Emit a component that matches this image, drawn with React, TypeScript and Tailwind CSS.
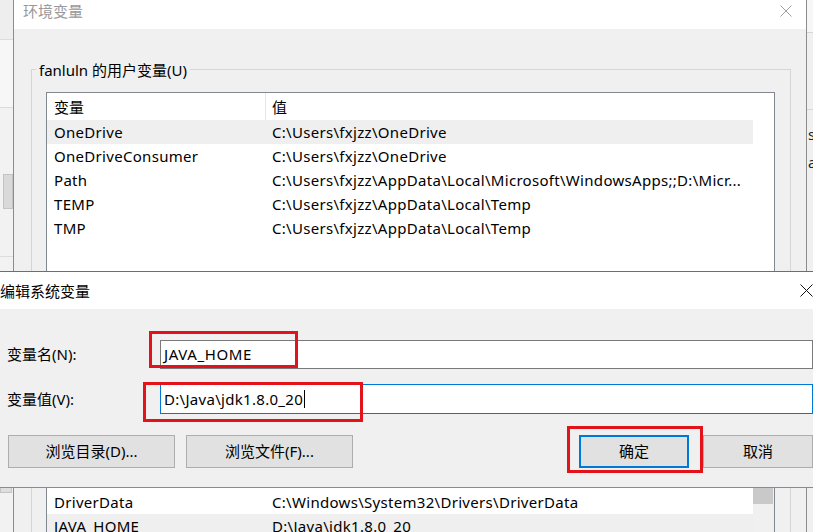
import React from "react";

type Row = { name: string; value: string; selected?: boolean };

const userRows: Row[] = [
  { name: "OneDrive", value: "C:\\Users\\fxjzz\\OneDrive", selected: true },
  { name: "OneDriveConsumer", value: "C:\\Users\\fxjzz\\OneDrive" },
  { name: "Path", value: "C:\\Users\\fxjzz\\AppData\\Local\\Microsoft\\WindowsApps;;D:\\Micr..." },
  { name: "TEMP", value: "C:\\Users\\fxjzz\\AppData\\Local\\Temp" },
  { name: "TMP", value: "C:\\Users\\fxjzz\\AppData\\Local\\Temp" },
];

const systemRows: Row[] = [
  { name: "ComSpec", value: "C:\\Windows\\system32\\cmd.exe" },
  { name: "DriverData", value: "C:\\Windows\\System32\\Drivers\\DriverData" },
  { name: "JAVA_HOME", value: "D:\\Java\\jdk1.8.0_20", selected: true },
];

function CloseIcon({ color, size }: { color: string; size: number }) {
  return (
    <svg width={size} height={size} viewBox={`0 0 ${size} ${size}`} className="shrink-0">
      <path d={`M0.5 0.5 L${size - 0.5} ${size - 0.5} M${size - 0.5} 0.5 L0.5 ${size - 0.5}`} stroke={color} strokeWidth="1" fill="none" />
    </svg>
  );
}

function ListHeader() {
  return (
    <div className="flex h-[27px] w-[706px] shrink-0 bg-white">
      <div className="h-full w-[219px] shrink-0 border-r border-[#e5e5e5] pl-[7px] pt-[2px] leading-[25px]">变量</div>
      <div className="pl-[6px] pt-[2px] leading-[25px]">值</div>
    </div>
  );
}

function ListRow({ row }: { row: Row }) {
  return (
    <div className={`flex h-[24px] w-[706px] shrink-0 leading-[24px] tracking-[0.3px] ${row.selected ? "bg-[#efefef]" : ""}`}>
      <div className="w-[219px] shrink-0 overflow-hidden whitespace-nowrap pl-[7px]">{row.name}</div>
      <div className="min-w-0 flex-1 overflow-hidden whitespace-nowrap pl-[6px]">{row.value}</div>
    </div>
  );
}

function LeftStrip() {
  return (
    <div className="flex w-[13px] shrink-0 flex-col bg-[#f2f2f2]">
      <div className="h-[40px] shrink-0 border-b border-[#dcdcdc] bg-[#eeeeee]" />
      <div className="h-[68px] shrink-0 border-b border-[#dcdcdc] bg-[#f7f7f7]" />
      <div className="h-[66px] shrink-0" />
      <div className="ml-[3px] h-[35px] shrink-0 border border-[#c4c4c4] bg-[#d9d9d9]" />
      <div className="h-[48px] shrink-0 border-b border-[#dcdcdc]" />
      <div className="h-[228px] shrink-0" />
      <div className="h-[8px] w-[12px] shrink-0 border border-[#c4c4c4] bg-[#dedede]" />
    </div>
  );
}

function RightStrip() {
  return (
    <div className="flex min-w-0 flex-1 flex-col overflow-hidden bg-[#f0f0f0]">
      <div className="h-[33px] shrink-0 border-b border-[#d6d6d6] bg-[#f7f7f7]" />
      <div className="h-[77px] shrink-0 border-b border-[#d6d6d6]" />
      <div className="mt-[10px] pl-[1px] leading-[28px] text-[#222]">s</div>
      <div className="pl-[1px] leading-[28px] text-[#222]">a</div>
    </div>
  );
}

function EnvWindow() {
  return (
    <div className="flex w-[794px] shrink-0 flex-col border-x border-[#8c8c8c]">
      <div className="flex h-[29px] shrink-0 items-start justify-between bg-white pl-[9px] pr-[14px]">
        <span className="leading-[22px] text-[#999999]">环境变量</span>
        <div className="mt-[5px]">
          <CloseIcon color="#a0a0a0" size={12} />
        </div>
      </div>
      <div className="flex-1 bg-[#f0f0f0] pl-[17px] pr-[15px] pt-[40px]">
        <div className="relative h-[500px] border-x border-t border-[#d5d5d5] pl-[14px] pr-[15px] pt-[22px]">
          <span className="absolute left-[4px] top-[-10px] bg-[#f0f0f0] px-[3px] leading-[20px]">fanluln 的用户变量(U)</span>

          <div className="flex h-[200px] flex-col overflow-hidden border border-[#828790] bg-white">
            <ListHeader />
            {userRows.map((r) => (
              <ListRow key={r.name} row={r} />
            ))}
          </div>

          <div className="h-[146px]" />

          <div className="flex h-[200px] overflow-hidden border border-[#828790] bg-white">
            <div className="flex w-[706px] shrink-0 flex-col">
              <ListHeader />
              {systemRows.map((r) => (
                <ListRow key={r.name} row={r} />
              ))}
            </div>
            <div className="flex w-[21px] shrink-0 flex-col bg-[#f0f0f0]">
              <div className="mt-[17px] h-[48px] w-[20px] bg-[#c9c9c9]" />
            </div>
          </div>
        </div>
      </div>
    </div>
  );
}

function EditDialog() {
  return (
    <div className="absolute left-0 top-[271px] w-[813px] border-y border-b-[#8a8a8a] border-t-[#6e6e6e]">
      <div className="flex h-[37px] items-center justify-between bg-white">
        <span className="leading-[20px]">编辑系统变量</span>
        <CloseIcon color="#111111" size={13} />
      </div>
      <div className="bg-[#f0f0f0] pb-[19px] pt-[31px]">
        <div className="flex h-[29px] items-center">
          <div className="w-[160px] shrink-0 pl-[7px]">变量名(N):</div>
          <div className="flex h-full flex-1 items-center border border-[#7a7a7a] bg-white pl-[3px] tracking-[0.6px]">JAVA_HOME</div>
        </div>
        <div className="mt-[15px] flex h-[30px] items-center">
          <div className="w-[160px] shrink-0 pl-[7px]">变量值(V):</div>
          <div className="flex h-full flex-1 items-center border border-[#0078d7] bg-white pl-[3px] tracking-[0.3px]">
            <span>D:\Java\jdk1.8.0_20</span>
            <span className="ml-[1px] h-[18px] w-[1px] bg-black" />
          </div>
        </div>
        <div className="mt-[21px] flex h-[33px] pl-[8px]">
          <button className="h-full w-[167px] border border-[#adadad] bg-[#e1e1e1]">浏览目录(D)...</button>
          <button className="ml-[11px] h-full w-[167px] border border-[#adadad] bg-[#e1e1e1]">浏览文件(F)...</button>
          <button className="ml-auto h-full w-[110px] border-2 border-[#0078d7] bg-[#e1e1e1]">确定</button>
          <button className="ml-[14px] h-full w-[110px] border border-[#adadad] bg-[#e1e1e1]">取消</button>
        </div>
      </div>
    </div>
  );
}

export default function App() {
  return (
    <div className="relative h-[532px] w-[813px] overflow-hidden bg-[#f0f0f0] font-['Noto_Sans','Noto_Sans_CJK_SC',sans-serif] text-[15px] text-black">
      <div className="flex h-full">
        <LeftStrip />
        <EnvWindow />
        <RightStrip />
      </div>

      <EditDialog />

      {/* red highlight boxes drawn over the screenshot */}
      <div className="pointer-events-none absolute left-[149px] top-[331px] h-[37px] w-[149px] border-[3px] border-[#e3131b]" />
      <div className="pointer-events-none absolute left-[143px] top-[382px] h-[40px] w-[220px] border-[3px] border-[#e3131b]" />
      <div className="pointer-events-none absolute left-[567px] top-[426px] h-[47px] w-[136px] border-[3px] border-[#e3131b]" />
    </div>
  );
}
